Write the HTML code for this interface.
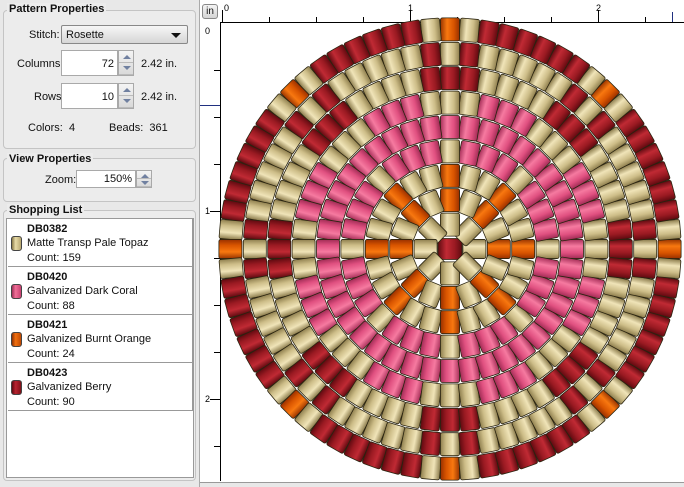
<!DOCTYPE html>
<html><head><meta charset="utf-8">
<style>
*{box-sizing:border-box;margin:0;padding:0}
body{width:684px;height:487px;overflow:hidden;background:#e8e8e8;font-family:"Liberation Sans",sans-serif;font-size:11px;color:#111;position:relative}
.abs{position:absolute}
.grp{position:absolute;left:3px;width:193px;border:1px solid #c4c4c4;border-radius:4px;background:#ececec}
.tt{position:absolute;font-weight:bold;font-size:11px;background:#ececec;padding:0 2px}
.inp{position:absolute;background:#fff;border:1px solid #a9a9a9;text-align:right;padding-right:3px;font-size:11px}
.spin{position:absolute;width:16px;border:1px solid #a9a9a9;background:linear-gradient(#f4f4f4,#d8d8d8)}
.spin div{height:50%;border-bottom:1px solid #bbb;position:relative}
.spin div:after{content:"";position:absolute;left:4px;border-left:4px solid transparent;border-right:4px solid transparent}
.spin .u:after{top:40%;border-bottom:4px solid #7080a0}
.spin .d:after{top:25%;border-top:4px solid #7080a0}
.item{position:absolute;left:8px;width:185px;height:48px;border-bottom:1px solid #999;border-right:1px solid #999;background:#fff}
.sw{position:absolute;left:3px;top:17px;width:11px;height:15px;border-radius:3px;border:1px solid #444}
.item b{position:absolute;left:19px;top:4px;font-size:11px}
.item .n{position:absolute;left:19px;top:18px}
.item .c{position:absolute;left:19px;top:33px}
</style></head><body>
<div class="grp" style="top:10px;height:139px"></div>
<div class="tt" style="left:7px;top:3px">Pattern Properties</div>
<div class="abs" style="left:29px;top:29px">Stitch:</div>
<div class="abs" style="left:61px;top:25px;width:127px;height:19px;border:1px solid #888;border-radius:2px;background:linear-gradient(#f6f6f6,#d6d6d6);padding:3px 4px">Rosette<span style="position:absolute;right:6px;top:7px;border-left:5px solid transparent;border-right:5px solid transparent;border-top:5px solid #111"></span></div>
<div class="abs" style="left:17px;top:58px">Columns:</div>
<div class="inp" style="left:61px;top:50px;width:57px;height:26px;padding-top:7px">72</div>
<div class="spin" style="left:118px;top:50px;height:26px"><div class="u"></div><div class="d"></div></div>
<div class="abs" style="left:141px;top:58px">2.42 in.</div>
<div class="abs" style="left:34px;top:91px">Rows:</div>
<div class="inp" style="left:61px;top:83px;width:57px;height:26px;padding-top:7px">10</div>
<div class="spin" style="left:118px;top:83px;height:26px"><div class="u"></div><div class="d"></div></div>
<div class="abs" style="left:141px;top:91px">2.42 in.</div>
<div class="abs" style="left:28px;top:122px">Colors:&nbsp; 4</div>
<div class="abs" style="left:109px;top:122px">Beads:&nbsp; 361</div>

<div class="grp" style="top:158px;height:44px"></div>
<div class="tt" style="left:7px;top:153px">View Properties</div>
<div class="abs" style="left:45px;top:174px">Zoom:</div>
<div class="inp" style="left:76px;top:170px;width:60px;height:18px;padding-top:2px">150%</div>
<div class="spin" style="left:136px;top:170px;height:18px"><div class="u"></div><div class="d"></div></div>

<div class="grp" style="top:210px;height:271px"></div>
<div class="tt" style="left:7px;top:204px">Shopping List</div>
<div class="abs" style="left:6px;top:218px;width:188px;height:260px;background:#fff;border:1px solid #999"></div>
<div class="item" style="top:219px"><div class="sw" style="background:linear-gradient(90deg,#8a7a48,#e8dba8 40%,#b8a770)"></div><b>DB0382</b><div class="n">Matte Transp Pale Topaz</div><div class="c">Count: 159</div></div>
<div class="item" style="top:267px"><div class="sw" style="background:linear-gradient(90deg,#a03058,#f07098 40%,#c84070)"></div><b>DB0420</b><div class="n">Galvanized Dark Coral</div><div class="c">Count: 88</div></div>
<div class="item" style="top:315px"><div class="sw" style="background:linear-gradient(90deg,#903000,#f07010 40%,#c04800)"></div><b>DB0421</b><div class="n">Galvanized Burnt Orange</div><div class="c">Count: 24</div></div>
<div class="item" style="top:363px"><div class="sw" style="background:linear-gradient(90deg,#600810,#b82430 40%,#801018)"></div><b>DB0423</b><div class="n">Galvanized Berry</div><div class="c">Count: 90</div></div>

<div class="abs" style="left:199px;top:0;width:485px;height:487px;background:#fff;border-left:1px solid #aaa"></div>
<div class="abs" style="left:200px;top:482px;width:484px;height:5px;background:#e8e8e8;border-top:1px solid #999"></div>
<div class="abs" style="left:202px;top:4px;width:16px;height:15px;border:1px solid #888;border-radius:3px;background:linear-gradient(#f4f4f4,#d4d4d4);font-size:10px;text-align:center;line-height:13px">in</div>
<svg class="abs" style="left:0;top:0" width="684" height="487">
<g stroke="#000" stroke-width="1" shape-rendering="crispEdges">
<line x1="220" y1="22.5" x2="684" y2="22.5"/>
<line x1="220.5" y1="22" x2="220.5" y2="481"/>
<line x1="222.5" y1="10" x2="222.5" y2="22"/><line x1="269.5" y1="17" x2="269.5" y2="22"/><line x1="316.5" y1="17" x2="316.5" y2="22"/><line x1="363.5" y1="17" x2="363.5" y2="22"/>
<line x1="410.5" y1="10" x2="410.5" y2="22"/><line x1="457.5" y1="17" x2="457.5" y2="22"/><line x1="504.5" y1="17" x2="504.5" y2="22"/><line x1="551.5" y1="17" x2="551.5" y2="22"/>
<line x1="598.5" y1="10" x2="598.5" y2="22"/><line x1="645.5" y1="17" x2="645.5" y2="22"/>
<line x1="214" y1="70.5" x2="220" y2="70.5"/><line x1="214" y1="117.5" x2="220" y2="117.5"/><line x1="214" y1="164.5" x2="220" y2="164.5"/><line x1="210" y1="211.5" x2="220" y2="211.5"/>
<line x1="214" y1="258.5" x2="220" y2="258.5"/><line x1="214" y1="305.5" x2="220" y2="305.5"/><line x1="214" y1="352.5" x2="220" y2="352.5"/><line x1="210" y1="399.5" x2="220" y2="399.5"/><line x1="214" y1="446.5" x2="220" y2="446.5"/>
</g>
<line x1="200" y1="105.5" x2="220" y2="105.5" stroke="#203080"/>
<line x1="672.5" y1="12" x2="672.5" y2="22" stroke="#203080"/>
<g font-family="Liberation Sans,sans-serif" font-size="9" fill="#000">
<text x="224" y="11">0</text><text x="408" y="11">1</text><text x="596" y="11">2</text>
<text x="205" y="34">0</text><text x="205" y="214">1</text><text x="205" y="402">2</text>
</g>
<defs>
<linearGradient id="gT" x1="0" x2="1"><stop offset="0" stop-color="#8a7a4a"/><stop offset=".35" stop-color="#f0e4b8"/><stop offset=".7" stop-color="#cdbd88"/><stop offset="1" stop-color="#8f7f4e"/></linearGradient>
<linearGradient id="gP" x1="0" x2="1"><stop offset="0" stop-color="#a8305a"/><stop offset=".35" stop-color="#f67aa0"/><stop offset=".7" stop-color="#e05080"/><stop offset="1" stop-color="#a02c55"/></linearGradient>
<linearGradient id="gO" x1="0" x2="1"><stop offset="0" stop-color="#983400"/><stop offset=".35" stop-color="#f87810"/><stop offset=".7" stop-color="#d85400"/><stop offset="1" stop-color="#983000"/></linearGradient>
<linearGradient id="gR" x1="0" x2="1"><stop offset="0" stop-color="#5e0a10"/><stop offset=".35" stop-color="#c02a34"/><stop offset=".7" stop-color="#9a1a22"/><stop offset="1" stop-color="#5e0a10"/></linearGradient>
</defs>
<g id="beads"></g>
</svg>
<script>
(function(){
var g=document.getElementById('beads'),cx=450,cy=249,sp=24.4,out='';
function col(k,j){
 if(k==0)return'R';
 if(k==1)return'T';
 if(k==2)return j==0?'O':'T';
 if(k==3)return j==0?'O':'T';
 if(k==4)return j==0?'T':'P';
 if(k==5)return'P';
 if(k==6)return j>=2?'P':'T';
 if(k==7)return j<=1?'R':'T';
 if(k==8)return j==1?'R':'T';
 if(k==9)return j==0?'O':(j==1?'T':'R');
}
function bead(x,y,a,c,w,h){
 out+='<rect x="'+(-w/2)+'" y="'+(-h/2)+'" width="'+w+'" height="'+h+'" rx="2" fill="url(#g'+c+')" stroke="#2a2410" stroke-width="0.8" transform="translate('+x.toFixed(2)+','+y.toFixed(2)+') rotate('+a.toFixed(2)+')"/>';
}
bead(cx,cy,0,'R',24,21);
for(var k=1;k<=9;k++){
 var n=8*k,r=sp*k;
 for(var i=0;i<n;i++){
  var m=i%k,j=Math.min(m,k-m);
  var th=2*Math.PI*i/n;
  var x=cx+r*Math.cos(th),y=cy-r*Math.sin(th);
  var deg=-th*180/Math.PI+90;
  bead(x,y,deg,col(k,j),Math.min(19.5,2*Math.PI*r/n),23);
 }
}
g.innerHTML=out;
})();
</script>
</body></html>
